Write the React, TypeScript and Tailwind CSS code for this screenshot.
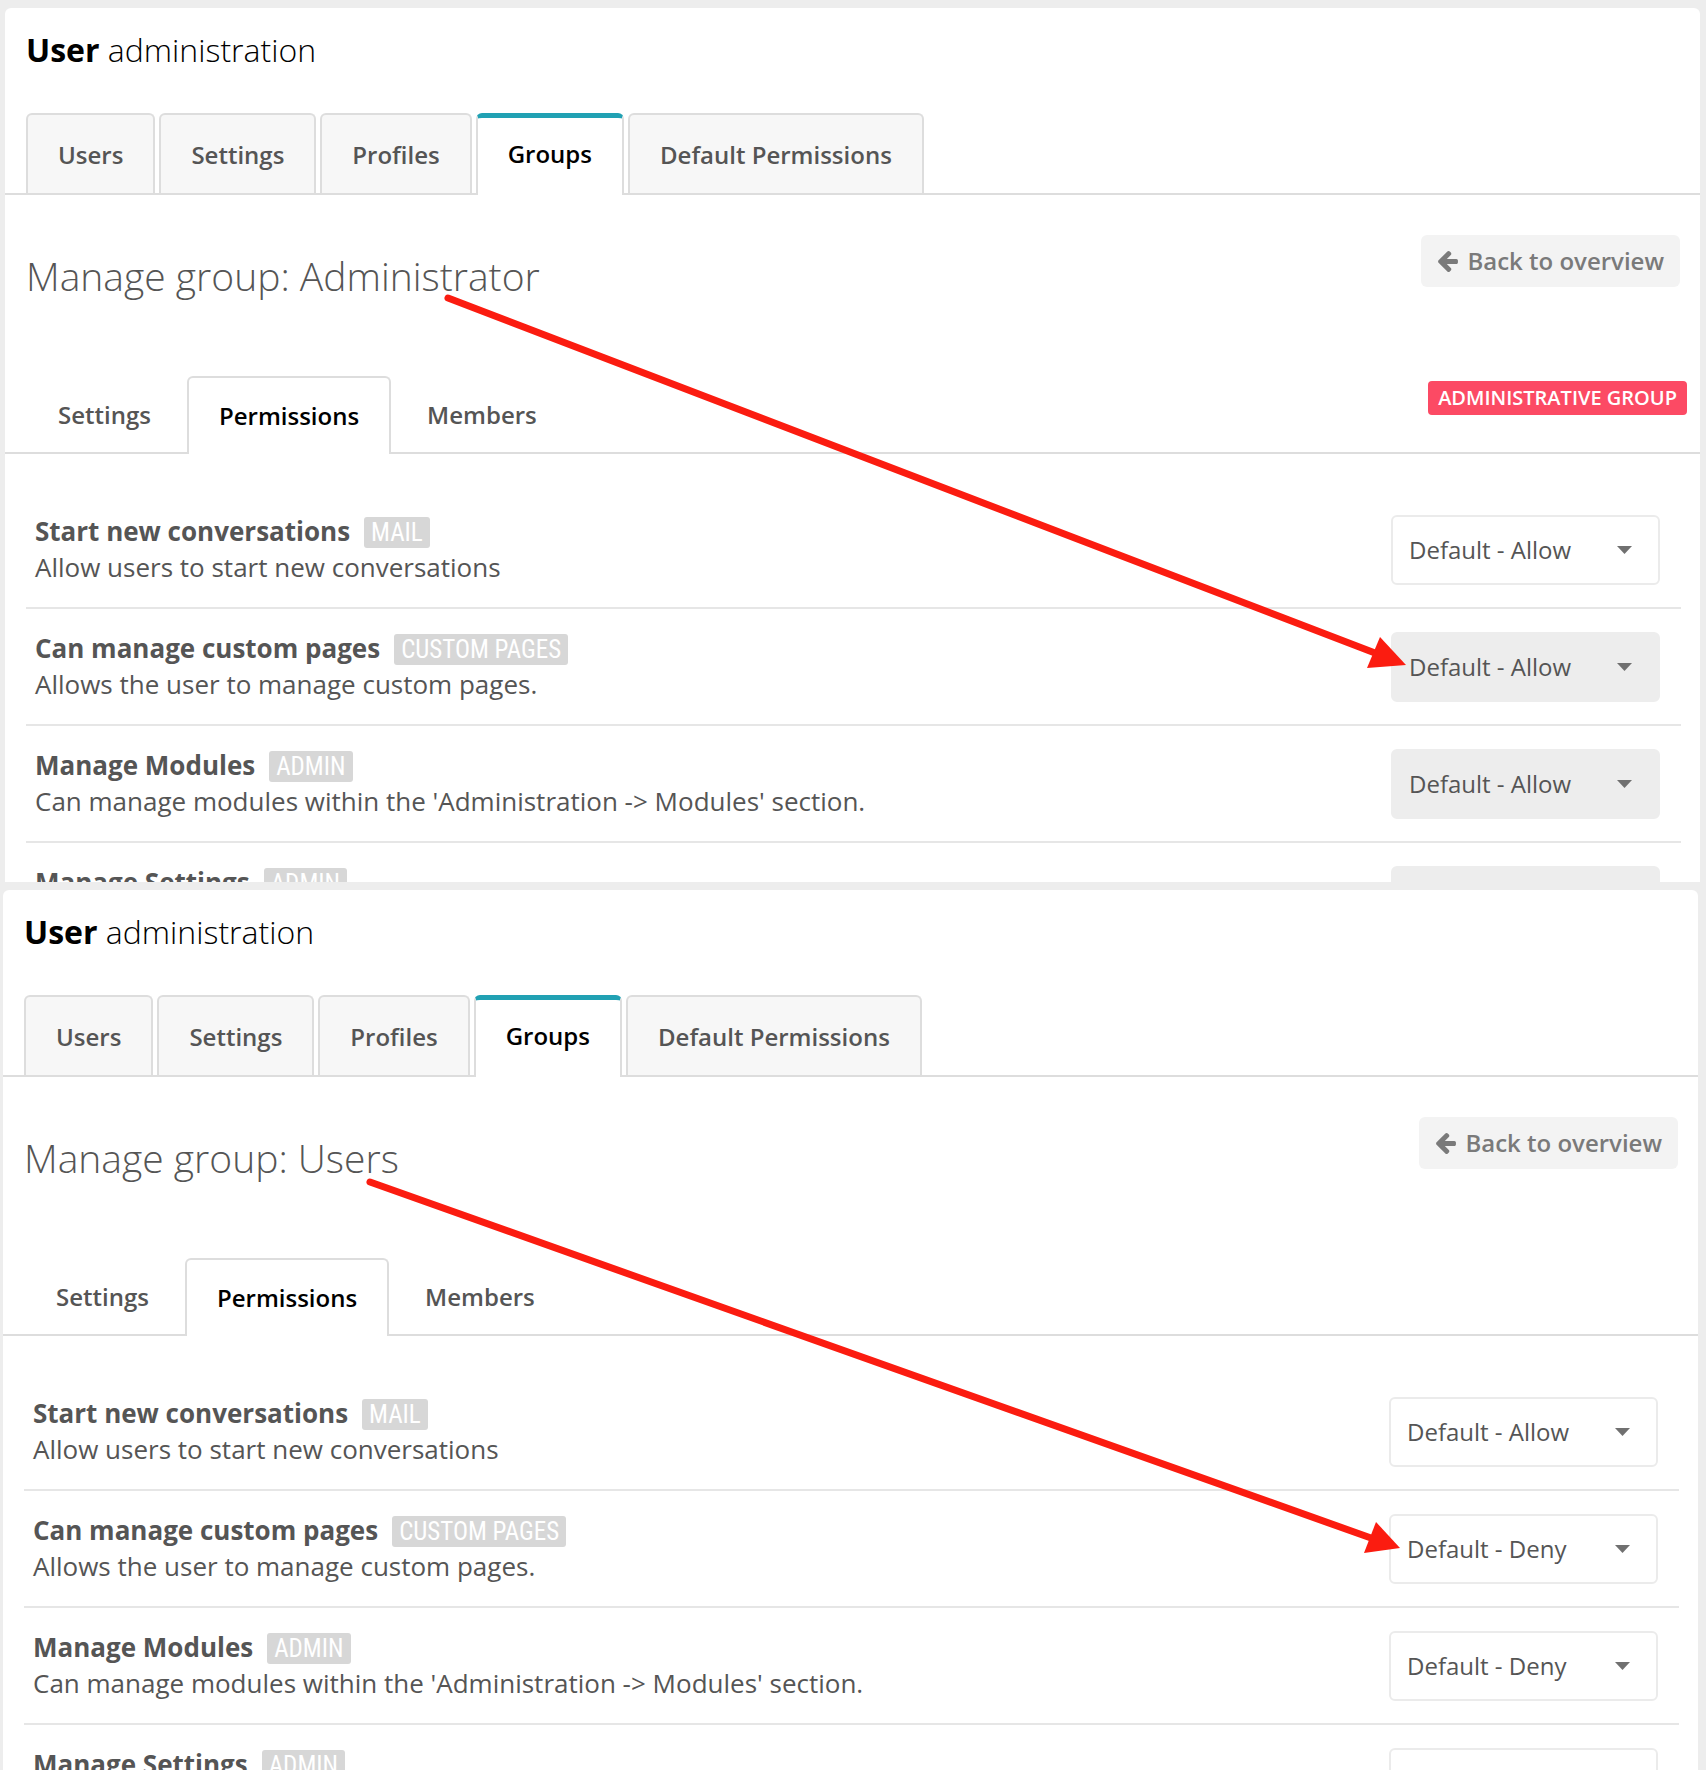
type Perm = {
  title: string;
  tag: string;
  desc: string;
  value: string;
  locked: boolean;
};

const mainTabs = ["Users", "Settings", "Profiles", "Groups", "Default Permissions"];
const subTabs = ["Settings", "Permissions", "Members"];

const adminPerms: Perm[] = [
  { title: "Start new conversations", tag: "MAIL", desc: "Allow users to start new conversations", value: "Default - Allow", locked: false },
  { title: "Can manage custom pages", tag: "CUSTOM PAGES", desc: "Allows the user to manage custom pages.", value: "Default - Allow", locked: true },
  { title: "Manage Modules", tag: "ADMIN", desc: "Can manage modules within the 'Administration -> Modules' section.", value: "Default - Allow", locked: true },
  { title: "Manage Settings", tag: "ADMIN", desc: "Can manage general settings.", value: "Default - Allow", locked: true },
];

const userPerms: Perm[] = [
  { title: "Start new conversations", tag: "MAIL", desc: "Allow users to start new conversations", value: "Default - Allow", locked: false },
  { title: "Can manage custom pages", tag: "CUSTOM PAGES", desc: "Allows the user to manage custom pages.", value: "Default - Deny", locked: false },
  { title: "Manage Modules", tag: "ADMIN", desc: "Can manage modules within the 'Administration -> Modules' section.", value: "Default - Deny", locked: false },
  { title: "Manage Settings", tag: "ADMIN", desc: "Can manage general settings.", value: "Default - Deny", locked: false },
];

// font-awesome 4 style arrow-left
const ArrowLeft = () => (
  <svg width="22" height="21" viewBox="192 182 1472 1557" fill="currentColor">
    <path d="M1664 896v128q0 53-32.5 90.5t-84.5 37.5h-704l293 294q38 36 38 90t-38 90l-75 76q-37 37-90 37-52 0-91-37l-651-651q-37-37-37-90 0-52 37-91l651-650q38-38 91-38 52 0 90 38l75 74q38 38 38 91t-38 91l-293 293h704q52 0 84.5 37.5t32.5 90.5z" />
  </svg>
);

const PermissionRow = ({ perm }: { perm: Perm }) => (
  <div className="flex items-center justify-between border-b-2 border-[#e6e6e6] pt-[21px] pb-[21px] pl-[9px]">
    <div>
      <div className="flex items-center gap-[14px]">
        <span className="text-[26px] leading-[36px] font-bold text-[#555555]">{perm.title}</span>
        <span className="mt-[3px] flex h-[31px] items-center rounded-[3px] bg-[#d7d7d7] px-[7px] font-['Liberation_Sans_Narrow','Roboto_Condensed',sans-serif] text-[25px] text-white">
          {perm.tag}
        </span>
      </div>
      <div className="text-[26px] leading-[37px] text-[#555555]">{perm.desc}</div>
    </div>
    <div
      className={
        perm.locked
          ? "mr-[21px] flex h-[70px] w-[269px] items-center justify-between rounded-[6px] border-2 border-[#ededed] bg-[#ededed] pl-[16px] pr-[26px] text-[24px] text-[#555555]"
          : "mr-[21px] flex h-[70px] w-[269px] items-center justify-between rounded-[6px] border-2 border-[#ebebeb] bg-white pl-[16px] pr-[26px] text-[24px] text-[#555555]"
      }
    >
      <span>{perm.value}</span>
      <svg width="15" height="8" viewBox="0 0 15 8">
        <polygon points="0,0 15,0 7.5,8" fill="#707070" />
      </svg>
    </div>
  </div>
);

const Panel = ({ group, admin, perms }: { group: string; admin: boolean; perms: Perm[] }) => (
  <div className="w-[1695px] rounded-t-[6px] bg-white pt-[24px]">
    <h2 className="pl-[21px] text-[32px] leading-[36px] font-light text-black">
      <strong className="font-bold">User</strong> administration
    </h2>

    {/* top level tabs */}
    <div className="mt-[45px] flex items-start gap-[4px] border-b-2 border-[#dddddd] pl-[21px]">
      {mainTabs.map((t) =>
        t === "Groups" ? (
          <div
            key={t}
            className="-mb-[2px] flex h-[82px] items-center rounded-t-[6px] border-2 border-t-[5px] border-b-0 border-[#dddddd] border-t-[#21a1b3] bg-white px-[30px] pb-[6px] text-[24px] font-semibold text-black"
          >
            {t}
          </div>
        ) : (
          <div
            key={t}
            className="flex h-[80px] items-center rounded-t-[6px] border-2 border-b-0 border-[#dddddd] bg-[#f7f7f7] px-[30px] pt-[2px] text-[24px] font-semibold text-[#555555]"
          >
            {t}
          </div>
        )
      )}
    </div>

    {/* page header */}
    <div className="mt-[40px] flex items-start justify-between pl-[21px] pr-[20px]">
      <h1 className="mt-[21px] text-[39px] leading-[40px] font-light text-[#555555]">Manage group: {group}</h1>
      <button className="flex h-[52px] items-center gap-[8px] rounded-[6px] bg-[#f3f3f3] px-[16px] text-[24px] font-semibold text-[#7a7a7a]">
        <ArrowLeft />
        Back to overview
      </button>
    </div>

    {/* group tabs */}
    <div className="mt-[80px] flex items-start justify-between border-b-2 border-[#dddddd] pl-[21px]">
      <div className="flex items-start gap-[4px]">
        {subTabs.map((t) =>
          t === "Permissions" ? (
            <div
              key={t}
              className="-mb-[2px] flex h-[78px] items-center rounded-t-[6px] border-2 border-b-0 border-[#dddddd] bg-white px-[30px] text-[24px] font-semibold text-black"
            >
              {t}
            </div>
          ) : (
            <div
              key={t}
              className="flex h-[76px] items-center border-2 border-b-0 border-transparent px-[30px] text-[24px] font-semibold text-[#555555]"
            >
              {t}
            </div>
          )
        )}
      </div>
      {admin && (
        <span className="mt-[5px] mr-[13px] flex h-[34px] items-center rounded-[4px] bg-[#fc4a64] px-[10px] text-[20px] font-semibold text-white">
          ADMINISTRATIVE GROUP
        </span>
      )}
    </div>

    {/* permissions list */}
    <div className="mt-[38px] pl-[21px] pr-[19px]">
      {perms.map((p) => (
        <PermissionRow key={p.title} perm={p} />
      ))}
    </div>
  </div>
);

export default function App() {
  return (
    <div className="relative h-[1770px] w-[1706px] overflow-hidden bg-[#ededed] font-['Open_Sans',sans-serif]">
      <div className="h-[882px] overflow-hidden pt-[8px] pl-[5px]">
        <Panel group="Administrator" admin perms={adminPerms} />
      </div>
      <div className="h-[888px] overflow-hidden pt-[8px] pl-[3px]">
        <Panel group="Users" admin={false} perms={userPerms} />
      </div>

      {/* annotation arrows */}
      <svg className="pointer-events-none absolute inset-0" width="1706" height="1770" viewBox="0 0 1706 1770">
        <line x1="448" y1="298" x2="1375" y2="653" stroke="#fb1c10" strokeWidth="7" strokeLinecap="round" />
        <polygon points="1406,665 1367,668 1380,637" fill="#fb1c10" />
        <line x1="370" y1="1182" x2="1371" y2="1538" stroke="#fb1c10" strokeWidth="7" strokeLinecap="round" />
        <polygon points="1400,1548 1364,1553 1376,1522" fill="#fb1c10" />
      </svg>
    </div>
  );
}
